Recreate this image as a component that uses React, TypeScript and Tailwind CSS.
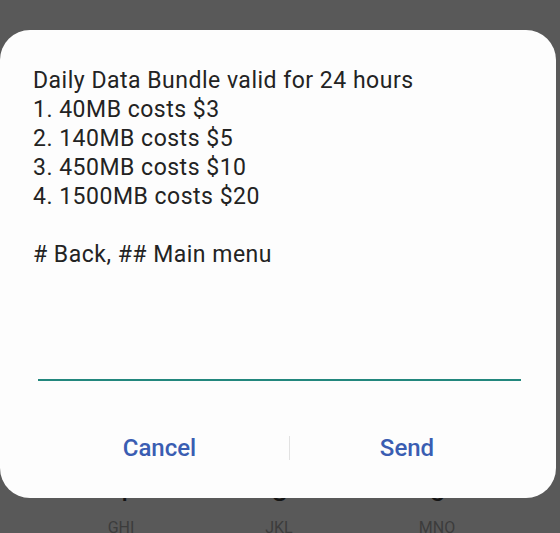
const lines = [
  "Daily Data Bundle valid for 24 hours",
  "1. 40MB costs $3",
  "2. 140MB costs $5",
  "3. 450MB costs $10",
  "4. 1500MB costs $20",
  "",
  "# Back, ## Main menu",
];

const keys = [
  { digit: "4", letters: "GHI" },
  { digit: "5", letters: "JKL" },
  { digit: "6", letters: "MNO" },
];

export default function App() {
  return (
    <div
      className="relative w-[560px] h-[533px] overflow-hidden bg-[#595959]"
      style={{ fontFamily: "Roboto, 'Noto Sans', sans-serif" }}
    >
      {/* Dialer keypad behind the dialog */}
      <div className="pt-[474px] pl-[42px]">
        <div className="grid grid-cols-3 w-[474px]">
          {keys.map((k) => (
            <div key={k.digit} className="flex flex-col items-center">
              <div className="text-[32px] leading-[32px] text-[#141414]">{k.digit}</div>
              <div className="mt-[13px] text-[16px] leading-[18px] text-[#3c3c3c]">{k.letters}</div>
            </div>
          ))}
        </div>
      </div>

      {/* USSD dialog */}
      <div className="absolute left-0 top-[30px] w-[556px] h-[468px] rounded-[30px] bg-[#fdfdfd] pt-[36px]">
        <div className="pl-[33px] text-[23px] leading-[29px] tracking-[0.5px] text-[#232323]">
          {lines.map((l, i) => (
            <div key={i} className="h-[29px] whitespace-pre">
              {l}
            </div>
          ))}
        </div>

        <div className="mt-[110px] ml-[38px] w-[483px] h-[2px] bg-[#22877d]" />

        <div className="mt-[53px] pl-[30px] flex items-center">
          <button type="button" className="w-[259px] text-center text-[24px] leading-[28px] font-medium text-[#3a5db2]">
            Cancel
          </button>
          <div className="w-px h-[24px] bg-[#e2e2e2]" />
          <button type="button" className="w-[234px] text-center text-[24px] leading-[28px] font-medium text-[#3a5db2]">
            Send
          </button>
        </div>
      </div>
    </div>
  );
}
